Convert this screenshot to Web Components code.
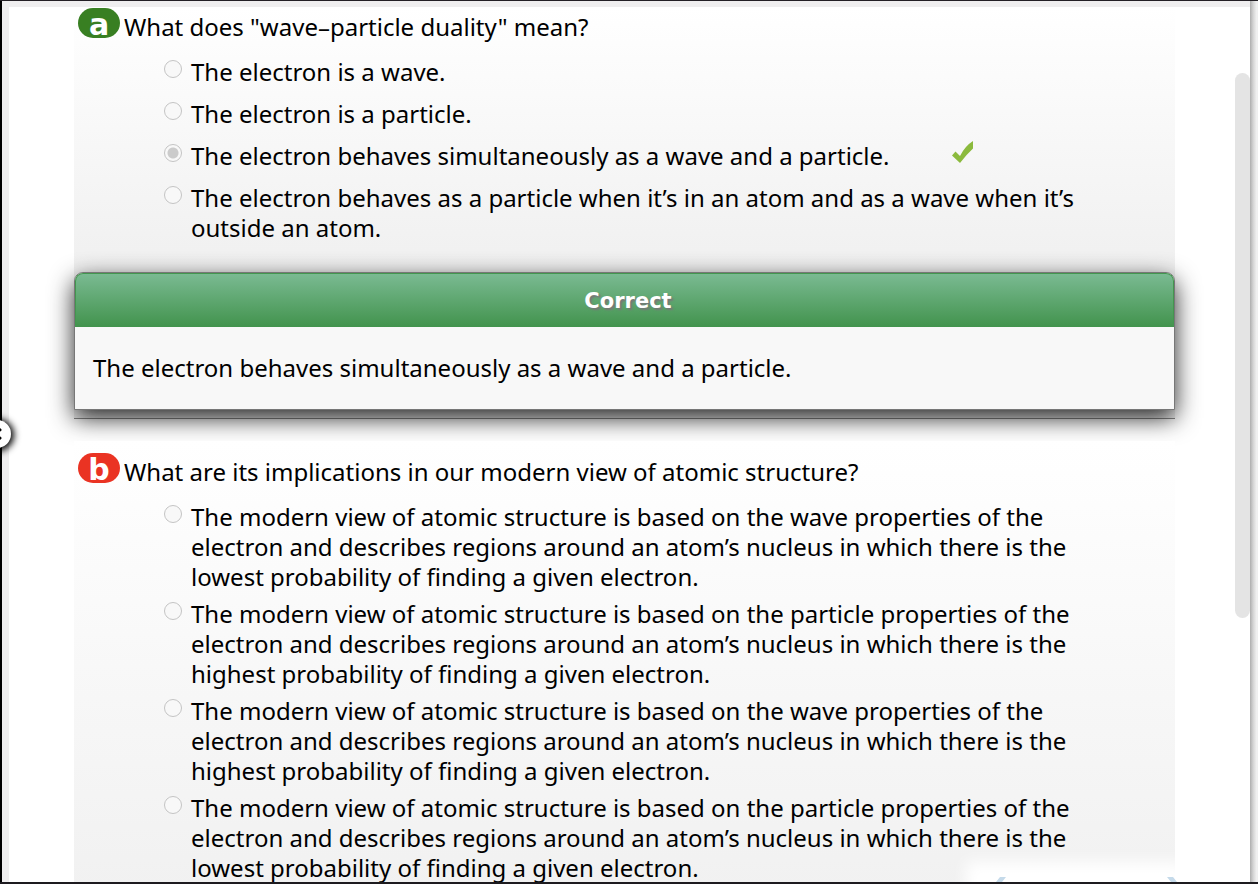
<!DOCTYPE html>
<html lang="en">
<head>
<meta charset="utf-8">
<title>Wave–particle duality</title>
<style>
html, body { height: 100%; }
body { margin: 0; overflow: hidden; font: 24px/30px "Noto Sans", Verdana, sans-serif; color: #000; }
</style>
</head>
<body>
<lesson-frame>
  <question-part letter="a" tone="#387f22">
    <span slot="title">What does "wave–particle duality" mean?</span>
    <answer-option group="a">The electron is a wave.</answer-option>
    <answer-option group="a">The electron is a particle.</answer-option>
    <answer-option group="a" chosen>The electron behaves simultaneously as a wave and a particle.</answer-option>
    <answer-option group="a">The electron behaves as a particle when it’s in an atom and as a wave when it’s outside an atom.</answer-option>
    <feedback-card slot="feedback" heading="Correct">The electron behaves simultaneously as a wave and a particle.</feedback-card>
  </question-part>
  <question-part letter="b" tone="#ea3323">
    <span slot="title">What are its implications in our modern view of atomic structure?</span>
    <answer-option group="b">The modern view of atomic structure is based on the wave properties of the electron and describes regions around an atom’s nucleus in which there is the lowest probability of finding a given electron.</answer-option>
    <answer-option group="b">The modern view of atomic structure is based on the particle properties of the electron and describes regions around an atom’s nucleus in which there is the highest probability of finding a given electron.</answer-option>
    <answer-option group="b">The modern view of atomic structure is based on the wave properties of the electron and describes regions around an atom’s nucleus in which there is the highest probability of finding a given electron.</answer-option>
    <answer-option group="b">The modern view of atomic structure is based on the particle properties of the electron and describes regions around an atom’s nucleus in which there is the lowest probability of finding a given electron.</answer-option>
  </question-part>
</lesson-frame>
<script>
class LessonFrame extends HTMLElement {
  constructor() {
    super();
    this.attachShadow({ mode: 'open' }).innerHTML = `
      <style>
        :host { display: flex; position: relative; height: 100vh; box-sizing: border-box; overflow: hidden;
          border-top: 1px solid #231f25; border-bottom: 2px solid #1d1b1f; background: #efeeef; }
        .rail { flex: none; width: 2px; background: #000; }
        main { flex: 1; min-width: 0; margin: 6px 0 0 7px; padding: 0 75px 0 65px; background: #fff; overflow: hidden; }
        .edge { flex: none; width: 8px; background: linear-gradient(90deg, #adadad, #d4d4d4 40%, #efefef 80%); }
        .thumb { position: absolute; right: 8px; top: 72px; width: 15px; height: 545px; border-radius: 8px; background: #e4e4e4; }
        .back { position: absolute; left: -17px; top: 419px; width: 28px; height: 28px; padding: 0; border: 0; border-radius: 50%;
          background: #fff; box-shadow: 1px 1px 7px 2px #000; }
        .back svg { position: absolute; right: 8px; top: 8px; }
        .helper { position: absolute; right: 88px; bottom: -60px; width: 190px; height: 66px; background: #fff; box-shadow: 0 0 14px 14px #fff; }
        .helper svg { display: block; overflow: visible; }
      </style>
      <div class="rail"></div>
      <main><slot></slot></main>
      <div class="edge"></div>
      <div class="thumb"></div>
      <button class="back" aria-label="Show sidebar"><svg width="10" height="12" viewBox="0 0 10 12"><path d="M8 1 3 6l5 5" fill="none" stroke="#000" stroke-width="2.5"/></svg></button>
      <div class="helper"><svg width="190" height="20" viewBox="0 0 190 20"><path d="M16 6 20 1h6l-4 5ZM187 1h6l4 5h-6Z" fill="#c5daea"/></svg></div>`;
  }
}
class QuestionPart extends HTMLElement {
  constructor() {
    super();
    const letter = this.getAttribute('letter');
    this.attachShadow({ mode: 'open' }).innerHTML = `
      <style>
        :host { display: block; }
        section { padding-bottom: 8px; background: linear-gradient(#fff, #f1f1f1); }
        :host([letter="a"]) section { border-bottom: 1px solid #8a8a8a; margin-bottom: 22px; background: linear-gradient(#fff, #f0f0f0 260px); }
        :host([letter="b"]) section { position: relative; }
        header { display: flex; padding: 1px 0 0 4px; gap: 4px; }
        .badge { flex: none; width: 42px; height: 30px; border-radius: 15px; color: #fff; font: 700 30px/33px "DejaVu Sans", Verdana, sans-serif;
          text-align: center; background: ${this.getAttribute('tone')}; }
        h2 { margin: 4px 0 0; font: inherit; }
        :host([letter="b"]) header { padding-top: 12px; }
        fieldset { margin: 0; padding: 15px 55px 0 90px; border: 0; min-width: 0; display: grid; gap: 7px; }
        :host([letter="a"]) fieldset { gap: 12px; padding-bottom: 29px; }
      </style>
      <section>
        <header><span class="badge">${letter}</span><h2><slot name="title"></slot></h2></header>
        <fieldset aria-label="Part ${letter}"><slot></slot></fieldset>
        <slot name="feedback"></slot>
      </section>`;
  }
}
class AnswerOption extends HTMLElement {
  constructor() {
    super();
    const chosen = this.hasAttribute('chosen');
    this.attachShadow({ mode: 'open' }).innerHTML = `
      <style>
        :host { display: block; }
        label { display: flex; align-items: flex-start; gap: 9px; }
        input { appearance: none; box-sizing: border-box; flex: none; width: 18px; height: 18px; margin: 3px 0 0; border: 1px solid #c4c4c4; border-radius: 50%; background: #f8f8f8; }
        input:checked { background: radial-gradient(circle, #cbcbcb 5px, #f8f8f8 6px); }
        svg { flex: none; margin-left: 53px; }
      </style>
      <label><input type="radio" name="${this.getAttribute('group')}" disabled ${chosen ? 'checked' : ''}><span><slot></slot></span>${chosen ? '<svg width="22" height="24" viewBox="0 0 22 24"><path d="M0 14.500 3.500 10.500 8 15Q13 5 21 0v7.500Q14 14 8 22Z" fill="#8bba3d"/></svg>' : ''}</label>`;
  }
}
class FeedbackCard extends HTMLElement {
  constructor() {
    super();
    this.attachShadow({ mode: 'open' }).innerHTML = `
      <style>
        :host { display: block; border: 1px solid #777; border-radius: 9px 9px 0 0; background: #f8f8f8; box-shadow: 0 8px 25px rgba(0, 0, 0, 0.85); }
        h3 { margin: 0; padding: 12px 0 11px 7px; border: 1px solid #43964f; border-bottom: 0; border-radius: 8px 8px 0 0; text-align: center; color: #fff;
          font: 700 21px/30px "DejaVu Sans", Verdana, sans-serif; text-shadow: 2px 2px 2px #777; background: linear-gradient(#7aba92, #42934d); }
        p { margin: 0; padding: 26px 18px; }
      </style>
      <h3>${this.getAttribute('heading')}</h3><p><slot></slot></p>`;
  }
}
customElements.define('lesson-frame', LessonFrame);
customElements.define('question-part', QuestionPart);
customElements.define('answer-option', AnswerOption);
customElements.define('feedback-card', FeedbackCard);
</script>
</body>
</html>
